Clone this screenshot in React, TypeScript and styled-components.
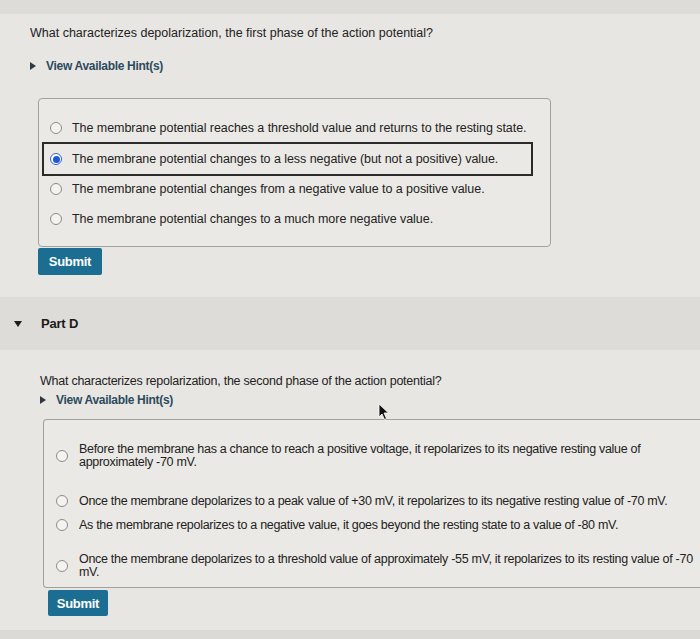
import React from "react";
import styled, { createGlobalStyle } from "styled-components";

const Global = createGlobalStyle`
  html, body { margin: 0; padding: 0; }
  body {
    background: #e8e6e2;
    font-family: "Liberation Sans", Arial, Helvetica, sans-serif;
    color: #1f1f1f;
    width: 700px;
    height: 639px;
    overflow: hidden;
  }
`;

const Page = styled.div`
  position: relative;
  width: 700px;
  height: 639px;
  display: flex;
  flex-direction: column;
`;

const TopBand = styled.div`
  height: 14px;
  background: #dedcd8;
`;

const Section = styled.section<{ $pl: number; $pt: number }>`
  padding-left: ${(p) => p.$pl}px;
  padding-top: ${(p) => p.$pt}px;
  display: flex;
  flex-direction: column;
`;

const Question = styled.div<{ $ls: number }>`
  font-size: 12.5px;
  line-height: 14px;
  letter-spacing: ${(p) => p.$ls}px;
  color: #222;
`;

const Hint = styled.div<{ $mt: number; $indent: number }>`
  margin-top: ${(p) => p.$mt}px;
  margin-left: ${(p) => p.$indent}px;
  display: flex;
  align-items: center;
  gap: 10px;
  font-size: 12px;
  font-weight: bold;
  letter-spacing: -0.3px;
  color: #2b4a5e;
  line-height: 14px;
`;

const Caret = styled.span`
  width: 0;
  height: 0;
  border-top: 4.5px solid transparent;
  border-bottom: 4.5px solid transparent;
  border-left: 6px solid #2b3a45;
`;

const Box = styled.div<{ $ml: number; $w: number; $mt: number; $pt: number; $pb: number; $open?: boolean }>`
  margin-top: ${(p) => p.$mt}px;
  margin-left: ${(p) => p.$ml}px;
  width: ${(p) => p.$w}px;
  box-sizing: border-box;
  background: #ebe9e5;
  border: 1px solid #a3a19e;
  border-right: ${(p) => (p.$open ? "none" : "1px solid #a3a19e")};
  border-radius: ${(p) => (p.$open ? "4px 0 0 4px" : "4px")};
  padding: ${(p) => p.$pt}px 0 ${(p) => p.$pb}px 0;
  display: flex;
  flex-direction: column;
`;

const Option = styled.label<{ $selected?: boolean; $h: number; $pl: number; $gap: number; $ls: number; $w?: number; $mt?: number }>`
  display: flex;
  align-items: center;
  gap: ${(p) => p.$gap}px;
  height: ${(p) => p.$h}px;
  margin-top: ${(p) => p.$mt ?? 0}px;
  box-sizing: border-box;
  padding-left: ${(p) => p.$pl}px;
  margin-left: 3px;
  width: ${(p) => (p.$w ? `${p.$w}px` : "auto")};
  border: 2px solid ${(p) => (p.$selected ? "#2a2a2a" : "transparent")};
  font-size: 12.5px;
  letter-spacing: ${(p) => p.$ls}px;
  line-height: 13px;
  color: #222;
`;

const Radio = styled.span<{ $checked?: boolean }>`
  flex: none;
  width: 12px;
  height: 12px;
  border-radius: 50%;
  box-sizing: border-box;
  border: 1px solid ${(p) => (p.$checked ? "#2c63d8" : "#8d8c8a")};
  background: ${(p) => (p.$checked ? "#fff" : "#f4f3f1")};
  display: flex;
  align-items: center;
  justify-content: center;
  &::after {
    content: "";
    display: ${(p) => (p.$checked ? "block" : "none")};
    width: 7px;
    height: 7px;
    border-radius: 50%;
    background: #1d57d6;
  }
`;

const OptionText = styled.span<{ $w?: number }>`
  max-width: ${(p) => (p.$w ? `${p.$w}px` : "none")};
`;

const SubmitButton = styled.button<{ $ml: number; $w: number; $h: number; $mt: number }>`
  margin-top: ${(p) => p.$mt}px;
  margin-left: ${(p) => p.$ml}px;
  width: ${(p) => p.$w}px;
  height: ${(p) => p.$h}px;
  background: #1b6e91;
  color: #fff;
  border: none;
  border-radius: 2px;
  font-family: "Liberation Sans", Arial, sans-serif;
  font-weight: bold;
  font-size: 13px;
  letter-spacing: -0.3px;
  padding: 0;
`;

const PartBand = styled.div`
  margin-top: 22px;
  height: 53px;
  background: #dedcd8;
  display: flex;
  align-items: center;
  gap: 19px;
  padding-left: 14px;
`;

const DownCaret = styled.span`
  width: 0;
  height: 0;
  border-left: 4.5px solid transparent;
  border-right: 4.5px solid transparent;
  border-top: 6px solid #1e1e1e;
`;

const PartTitle = styled.span`
  font-size: 13px;
  font-weight: bold;
  letter-spacing: -0.2px;
  color: #1a1a1a;
`;

const Cursor = styled.svg`
  position: absolute;
  left: 378px;
  top: 403px;
`;

const BottomBand = styled.div`
  margin-top: auto;
  height: 9px;
  background: #dcdad6;
`;

const q1 = [
  { t: "The membrane potential reaches a threshold value and returns to the resting state.", h: 30, mt: 0 },
  { t: "The membrane potential changes to a less negative (but not a positive) value.", h: 34, mt: -1 },
  { t: "The membrane potential changes from a negative value to a positive value.", h: 30, mt: -2 },
  { t: "The membrane potential changes to a much more negative value.", h: 30, mt: 0 },
];

const q2 = [
  { t: "Before the membrane has a chance to reach a positive voltage, it repolarizes to its negative resting value of approximately -70 mV.", h: 30, mt: 0 },
  { t: "Once the membrane depolarizes to a peak value of +30 mV, it repolarizes to its negative resting value of -70 mV.", h: 24, mt: 18 },
  { t: "As the membrane repolarizes to a negative value, it goes beyond the resting state to a value of -80 mV.", h: 24, mt: 0 },
  { t: "Once the membrane depolarizes to a threshold value of approximately -55 mV, it repolarizes to its resting value of -70 mV.", h: 30, mt: 14 },
];

export default function App() {
  return (
    <Page>
      <Global />
      <TopBand />
      <Section $pl={30} $pt={12}>
        <Question $ls={0}>What characterizes depolarization, the first phase of the action potential?</Question>
        <Hint $mt={19} $indent={0}>
          <Caret />
          <span>View Available Hint(s)</span>
        </Hint>
        <Box $ml={8} $w={513} $mt={25} $pt={14} $pb={12}>
          {q1.map((o, i) => (
            <Option key={i} $h={o.h} $mt={o.mt} $pl={6} $gap={10} $ls={-0.05} $w={i === 1 ? 491 : undefined} $selected={i === 1}>
              <Radio $checked={i === 1} />
              <OptionText>{o.t}</OptionText>
            </Option>
          ))}
        </Box>
        <SubmitButton $ml={8} $w={64} $h={27} $mt={1}>Submit</SubmitButton>
      </Section>
      <PartBand>
        <DownCaret />
        <PartTitle>Part D</PartTitle>
      </PartBand>
      <Section $pl={40} $pt={24}>
        <Question $ls={-0.25}>What characterizes repolarization, the second phase of the action potential?</Question>
        <Hint $mt={5} $indent={0}>
          <Caret />
          <span>View Available Hint(s)</span>
        </Hint>
        <Box $ml={3} $w={660} $mt={12} $pt={21} $pb={6} $open>
          {q2.map((o, i) => (
            <Option key={i} $h={o.h} $mt={o.mt} $pl={7} $gap={11} $ls={-0.3}>
              <Radio />
              <OptionText $w={622}>{o.t}</OptionText>
            </Option>
          ))}
        </Box>
        <SubmitButton $ml={8} $w={60} $h={26} $mt={2}>Submit</SubmitButton>
      </Section>
      <BottomBand />
      <Cursor width="12" height="18" viewBox="0 0 12 18">
        <path d="M1 1 L1 14 L4 11 L6.5 16.5 L8.5 15.5 L6 10 L10.5 10 Z" fill="#111" stroke="#fff" strokeWidth="0.8" />
      </Cursor>
    </Page>
  );
}
